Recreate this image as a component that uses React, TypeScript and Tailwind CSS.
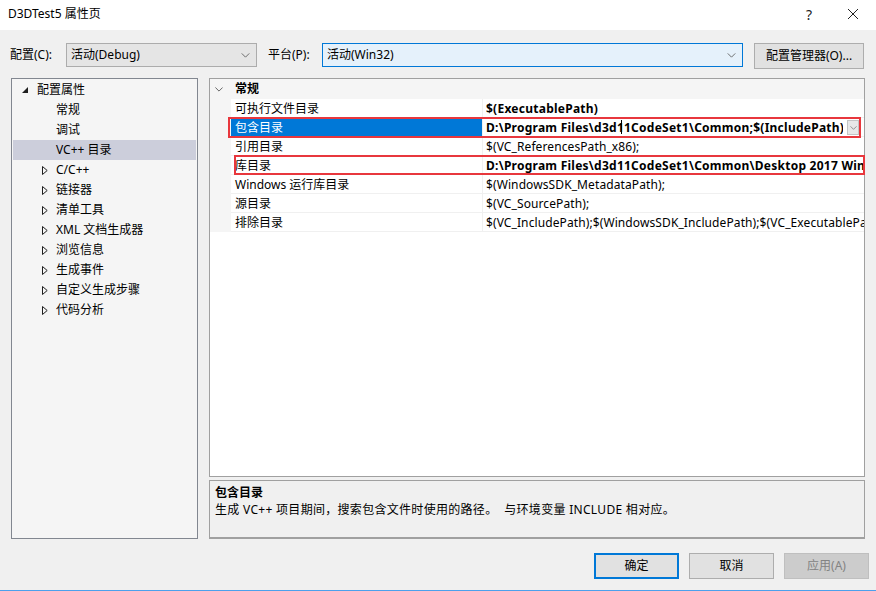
import React from "react";

const treeChildren = [
  { label: "常规", expandable: false },
  { label: "调试", expandable: false },
  { label: "VC++ 目录", expandable: false, selected: true },
  { label: "C/C++", expandable: true },
  { label: "链接器", expandable: true },
  { label: "清单工具", expandable: true },
  { label: "XML 文档生成器", expandable: true },
  { label: "浏览信息", expandable: true },
  { label: "生成事件", expandable: true },
  { label: "自定义生成步骤", expandable: true },
  { label: "代码分析", expandable: true },
];

type Prop = {
  name: string;
  value: string;
  bold?: boolean;
  selected?: boolean;
};

const props: Prop[] = [
  { name: "可执行文件目录", value: "$(ExecutablePath)", bold: true },
  {
    name: "包含目录",
    value: "D:\\Program Files\\d3d11CodeSet1\\Common;$(IncludePath)",
    bold: true,
    selected: true,
  },
  { name: "引用目录", value: "$(VC_ReferencesPath_x86);" },
  {
    name: "库目录",
    value: "D:\\Program Files\\d3d11CodeSet1\\Common\\Desktop 2017 Win32;$(LibraryPath)",
    bold: true,
  },
  { name: "Windows 运行库目录", value: "$(WindowsSDK_MetadataPath);" },
  { name: "源目录", value: "$(VC_SourcePath);" },
  {
    name: "排除目录",
    value: "$(VC_IncludePath);$(WindowsSDK_IncludePath);$(VC_ExecutablePath_x86);",
  },
];

function Chevron({ className }: { className?: string }) {
  return (
    <svg aria-hidden viewBox="0 0 10 6" className={className} fill="none" stroke="currentColor" strokeWidth="1">
      <path d="M0.5 0.5 5 5 9.5 0.5" />
    </svg>
  );
}

function Expanded() {
  return (
    <svg aria-hidden viewBox="0 0 6 6" className="h-[6px] w-[6px]">
      <path d="M6 0V6H0Z" fill="#1e1e1e" />
    </svg>
  );
}

function Collapsed() {
  return (
    <svg aria-hidden viewBox="0 0 6 9" className="h-[9px] w-[6px]">
      <path d="M0.5 0.5 5.2 4.5 0.5 8.5Z" fill="none" stroke="#1e1e1e" strokeWidth="1" />
    </svg>
  );
}

export default function App() {
  return (
    <div className="flex h-[591px] w-[876px] flex-col overflow-hidden border-b border-[#4ca0ec] bg-[#f0f0f0] font-['Noto_Sans','Noto_Sans_CJK_SC',sans-serif] text-[12px] text-black">
      {/* Title bar */}
      <div className="flex h-[30px] shrink-0 items-center bg-white pb-[2px] pl-[8px]">
        <span>D3DTest5 属性页</span>
        <span className="ml-auto mr-[36px] text-[14px] text-[#222]">?</span>
        <svg aria-hidden viewBox="0 0 10 10" className="mr-[18px] h-[10px] w-[10px]" stroke="#222" strokeWidth="1">
          <path d="M0 0 10 10M10 0 0 10" />
        </svg>
      </div>

      {/* Config row */}
      <div className="mt-[13px] flex items-start pl-[10px]">
        <span className="mt-[3px] w-[56px]">配置(C):</span>
        <div className="flex h-[24px] w-[191px] items-center border border-[#acacac] bg-[#e5e5e5] pl-[4px] pr-[6px]">
          <span>活动(Debug)</span>
          <Chevron className="ml-auto h-[5px] w-[9px] text-[#555]" />
        </div>
        <span className="ml-[11px] mt-[3px] w-[54px]">平台(P):</span>
        <div className="flex h-[24px] w-[421px] items-center border border-[#0078d7] bg-[#e5f1fb] pl-[4px] pr-[6px]">
          <span>活动(Win32)</span>
          <Chevron className="ml-auto h-[5px] w-[9px] text-[#555]" />
        </div>
        <div className="ml-[11px] flex h-[26px] w-[110px] items-center justify-center border border-[#adadad] bg-[#e1e1e1]">
          配置管理器(O)...
        </div>
      </div>

      {/* Main */}
      <div className="mt-[9px] flex h-[461px] px-[11px]">
        {/* Tree */}
        <div className="flex w-[187px] flex-col border border-[#828790] bg-[#f5f5f5] pt-px">
          <div className="flex h-[20px] items-center pl-[10px]">
            <Expanded />
            <span className="ml-[9px]">配置属性</span>
          </div>
          {treeChildren.map((item) => (
            <div
              key={item.label}
              className={
                item.selected
                  ? "mx-px flex h-[20px] items-center bg-[#cccedb] pl-[29px]"
                  : "mx-px flex h-[20px] items-center pl-[29px]"
              }
            >
              <span className="flex w-[14px] items-center">{item.expandable && <Collapsed />}</span>
              <span>{item.label}</span>
            </div>
          ))}
        </div>

        {/* Right column */}
        <div className="ml-[11px] flex w-[656px] flex-col">
          <div className="relative h-[399px] border border-[#a0a0a0] bg-white">
            <div className="flex h-[20px] items-center bg-[#f5f5f5]">
              <Chevron className="ml-[5px] h-[5px] w-[8px] text-[#444]" />
              <span className="ml-[12px] font-bold">常规</span>
            </div>
            {props.map((p) => (
              <div key={p.name} className="flex h-[19px]">
                <div className="w-[21px] shrink-0 bg-[#f5f5f5]" />
                <div
                  className={
                    p.selected
                      ? "flex w-[252px] shrink-0 items-center border-b border-r border-[#f0f0f0] bg-[#0078d7] pl-[4px] pt-px text-white"
                      : "flex w-[252px] shrink-0 items-center border-b border-r border-[#f0f0f0] pl-[4px] pt-px"
                  }
                >
                  {p.name}
                </div>
                <div className="flex min-w-0 flex-1 items-center border-b border-[#f0f0f0] pl-[3px] pt-px">
                  <span
                    className={
                      p.bold
                        ? "min-w-0 flex-1 overflow-hidden whitespace-nowrap font-bold tracking-[0.25px]"
                        : "min-w-0 flex-1 overflow-hidden whitespace-nowrap tracking-[0.1px]"
                    }
                  >
                    {p.value}
                  </span>
                  {p.selected && (
                    <div className="ml-[4px] mr-[5px] flex h-[15px] w-[12px] shrink-0 items-center justify-center border border-[#c4c4c4] bg-[#e8e8e8]">
                      <Chevron className="h-[4px] w-[7px] text-[#666]" />
                    </div>
                  )}
                </div>
              </div>
            ))}

            {/* text caret */}
            <div className="absolute left-[411px] top-[41px] h-[14px] w-px bg-black" />
            {/* highlight boxes */}
            <div className="absolute left-[18px] top-[38px] h-[21px] w-[633px] border-2 border-[#e8373d]" />
            <div className="absolute left-[24px] top-[76px] h-[20px] w-[631px] border-2 border-[#e8373d]" />
          </div>

          <div className="mt-[3px] h-[59px] border border-b-2 border-[#a0a0a0] bg-[#f0f0f0] px-[5px] pt-[3px] leading-[17px]">
            <div className="font-bold">包含目录</div>
            <div className="tracking-[0.3px]">
              生成 VC++ 项目期间，搜索包含文件时使用的路径。&nbsp;&nbsp;与环境变量 INCLUDE 相对应。
            </div>
          </div>
        </div>
      </div>

      {/* Buttons */}
      <div className="mt-[14px] flex justify-end gap-[10px] pr-[7px]">
        <div className="flex h-[26px] w-[85px] items-center justify-center border-2 border-[#0078d7] bg-[#e1e1e1]">
          确定
        </div>
        <div className="flex h-[26px] w-[85px] items-center justify-center border border-[#adadad] bg-[#e1e1e1]">
          取消
        </div>
        <div className="flex h-[26px] w-[85px] items-center justify-center border border-[#bfbfbf] bg-[#cccccc] text-[#838383]">
          应用(A)
        </div>
      </div>
    </div>
  );
}
